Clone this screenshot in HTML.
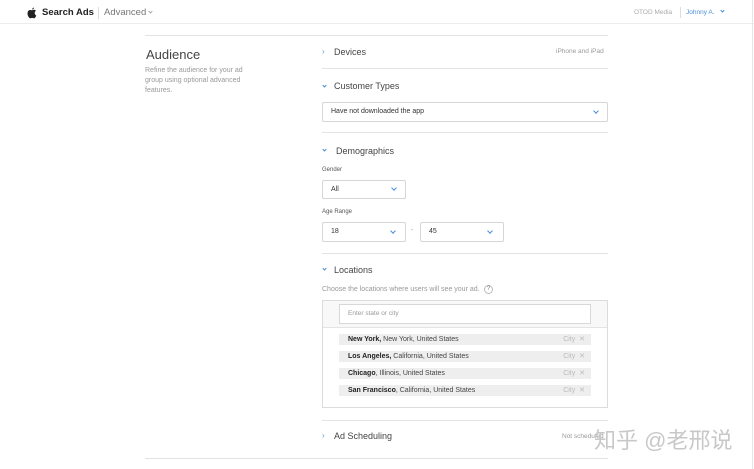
<!DOCTYPE html>
<html><head><meta charset="utf-8"><style>
*{margin:0;padding:0;box-sizing:border-box}
body{width:754px;height:469px;background:#fff;position:relative;overflow:hidden;font-family:"Liberation Sans","Noto Sans CJK SC",sans-serif;color:#333}
.a{position:absolute;white-space:nowrap}
.hl{position:absolute;height:1px;background:#e3e3e3}
.sel{position:absolute;border:1px solid #d6d6d6;border-radius:2px;background:#fff;font-size:7px;color:#333;padding-left:8px;line-height:17px}
.chev{position:absolute;width:4px;height:4px;border-right:1px solid #4a8fd8;border-bottom:1px solid #4a8fd8;transform:rotate(45deg)}
.sec{font-size:9px;color:#444}
.arr{font-size:8px;color:#5b9ad9}
.row{position:absolute;left:339px;width:252px;height:11px;background:#eeeeee;font-size:7px;line-height:11px;padding-left:9px;color:#444}
.row b{color:#222}
.row span{position:absolute;right:6px;color:#bbb}
</style></head><body>
<div class="hl" style="left:0;top:23px;width:754px;background:#ececec"></div>
<div class="a" style="left:752px;top:0;width:1px;height:469px;background:#e5e5e5"></div>
<svg class="a" style="left:27px;top:7px" width="10" height="12" viewBox="0 0 10 12"><path d="M7 0.5c0 1-.8 2-1.8 2C5.1 1.5 6 .6 7 .5zM5 3.3c.6 0 1.2-.5 2-.5.8 0 1.5.4 2 1-.9.6-1.4 1.4-1.3 2.4.1 1 .7 1.8 1.6 2.2-.4 1.2-1.2 2.9-2.3 2.9-.7 0-.9-.4-1.8-.4s-1.2.4-1.9.4C2.2 11.3.5 8.8.5 6.5.5 4.3 1.9 3 3.2 3c.8 0 1.3.3 1.8.3z" fill="#222"/></svg>
<div class="a" style="left:42px;top:7px;font-size:9.5px;font-weight:bold;color:#222">Search Ads</div>
<div class="a" style="left:98px;top:7px;width:1px;height:12px;background:#ddd"></div>
<div class="a" style="left:104px;top:7px;font-size:9.5px;color:#777">Advanced</div>
<div class="chev" style="left:149px;top:10px;border-color:#aaa;width:3px;height:3px"></div>
<div class="a" style="left:634px;top:9px;font-size:6.5px;color:#aaa">OTOD Media</div>
<div class="a" style="left:680px;top:7px;width:1px;height:11px;background:#ddd"></div>
<div class="a" style="left:686px;top:9px;font-size:6.5px;color:#4a8fd8">Johnny A.</div>
<div class="chev" style="left:721px;top:9px;width:3px;height:3px"></div>

<div class="hl" style="left:145px;top:35px;width:463px"></div>
<div class="a" style="left:146px;top:47px;font-size:13px;color:#444">Audience</div>
<div class="a" style="left:145px;top:66px;font-size:7px;color:#999;line-height:10px;white-space:normal;width:105px">Refine the audience for your ad group using optional advanced features.</div>

<div class="a arr" style="left:322px;top:47px">›</div>
<div class="a sec" style="left:334px;top:47px">Devices</div>
<div class="a" style="left:556px;top:48px;font-size:6.5px;color:#999">iPhone and iPad</div>
<div class="hl" style="left:322px;top:68px;width:286px"></div>

<div class="chev" style="left:323px;top:84px;width:3px;height:3px"></div>
<div class="a sec" style="left:334px;top:81px">Customer Types</div>
<div class="sel" style="left:322px;top:102px;width:286px;height:20px">Have not downloaded the app</div>
<div class="chev" style="left:594px;top:109px"></div>
<div class="hl" style="left:322px;top:132px;width:286px"></div>

<div class="chev" style="left:323px;top:148px;width:3px;height:3px"></div>
<div class="a sec" style="left:336px;top:146px">Demographics</div>
<div class="a" style="left:322px;top:167px;font-size:6px;color:#555">Gender</div>
<div class="sel" style="left:322px;top:180px;width:84px;height:19px">All</div>
<div class="chev" style="left:392px;top:186px"></div>
<div class="a" style="left:322px;top:209px;font-size:6px;color:#555">Age Range</div>
<div class="sel" style="left:322px;top:222px;width:84px;height:20px">18</div>
<div class="chev" style="left:391px;top:229px"></div>
<div class="a" style="left:411px;top:227px;font-size:7px;color:#999">-</div>
<div class="sel" style="left:420px;top:222px;width:84px;height:20px">45</div>
<div class="chev" style="left:488px;top:229px"></div>
<div class="hl" style="left:322px;top:253px;width:286px"></div>

<div class="chev" style="left:323px;top:267px;width:3px;height:3px"></div>
<div class="a sec" style="left:334px;top:265px">Locations</div>
<div class="a" style="left:322px;top:286px;font-size:7px;color:#999">Choose the locations where users will see your ad.</div>
<div class="a" style="left:484px;top:285px;width:9px;height:9px;border:1px solid #bbb;border-radius:50%;font-size:6px;line-height:7px;text-align:center;color:#777">?</div>
<div class="a" style="left:322px;top:300px;width:286px;height:108px;border:1px solid #dcdcdc;background:#fff"></div>
<div class="a" style="left:323px;top:301px;width:284px;height:27px;background:#f8f8f8;border-bottom:1px solid #e3e3e3"></div>
<div class="a" style="left:339px;top:304px;width:252px;height:20px;border:1px solid #d8d8d8;background:#fff;font-size:6.5px;color:#999;line-height:18px;padding-left:8px">Enter state or city</div>
<div class="row" style="top:334px"><b>New York,</b> New York, United States<span>City &nbsp;✕</span></div>
<div class="row" style="top:351px"><b>Los Angeles,</b> California, United States<span>City &nbsp;✕</span></div>
<div class="row" style="top:368px"><b>Chicago</b>, Illinois, United States<span>City &nbsp;✕</span></div>
<div class="row" style="top:385px"><b>San Francisco</b>, California, United States<span>City &nbsp;✕</span></div>

<div class="hl" style="left:322px;top:420px;width:286px"></div>
<div class="a arr" style="left:322px;top:431px">›</div>
<div class="a sec" style="left:334px;top:431px">Ad Scheduling</div>
<div class="a" style="left:562px;top:433px;font-size:6.5px;color:#999">Not scheduled</div>
<div class="a" style="left:594px;top:423px;font-size:22px;color:#c8c8c8">知乎 @老邢说</div>
<div class="hl" style="left:145px;top:458px;width:463px"></div>
</body></html>
